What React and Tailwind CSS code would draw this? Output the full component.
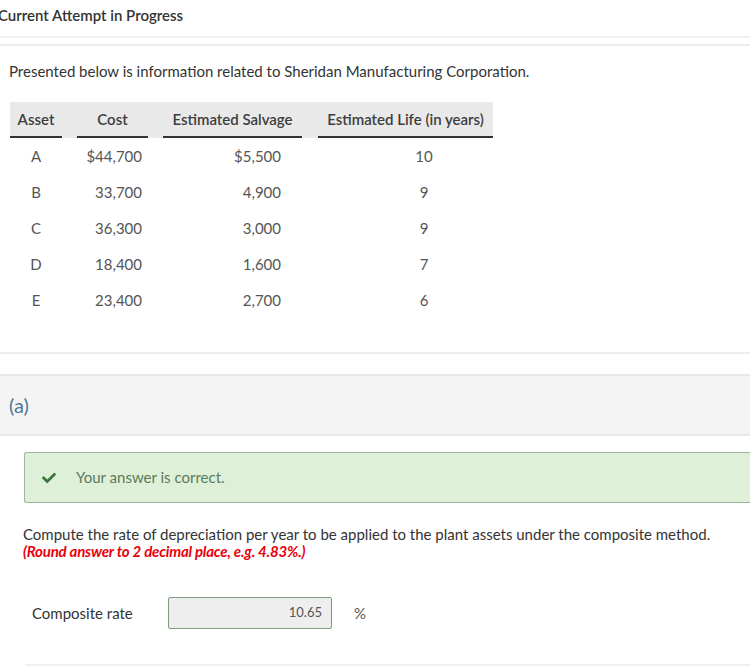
import { FaCheck } from "react-icons/fa";

const rows = [
  { asset: "A", cost: "$44,700", salvage: "$5,500", life: "10" },
  { asset: "B", cost: "33,700", salvage: "4,900", life: "9" },
  { asset: "C", cost: "36,300", salvage: "3,000", life: "9" },
  { asset: "D", cost: "18,400", salvage: "1,600", life: "7" },
  { asset: "E", cost: "23,400", salvage: "2,700", life: "6" },
];

export default function App() {
  return (
    <div className="w-[750px] h-[666px] overflow-hidden bg-white font-['Lato','Liberation_Sans',sans-serif] text-[#333]">
      {/* Title */}
      <div className="h-[36px] pt-[6px] -ml-[2px] text-[15px] leading-[18px] font-semibold text-[#333]">
        Current Attempt in Progress
      </div>
      <div className="border-t-2 border-[#f0f0f0] h-[8px]" />
      <div className="border-t-2 border-[#ececec]" />

      {/* Intro */}
      <p className="mt-[15px] ml-[9px] text-[15px] leading-[20px] text-[#333]">
        Presented below is information related to Sheridan Manufacturing Corporation.
      </p>

      {/* Table */}
      <div className="mt-[21px] ml-[10px] w-[483px]">
        <div className="flex h-[36px] bg-[#e9e9e9] text-[15px] font-semibold text-[#3d3d3d]">
          <div className="w-[52px] flex items-center justify-center border-b-2 border-[#333]">Asset</div>
          <div className="w-[15px]" />
          <div className="w-[71px] flex items-center justify-center border-b-2 border-[#333]">Cost</div>
          <div className="w-[15px]" />
          <div className="w-[139px] flex items-center justify-center border-b-2 border-[#333]">Estimated Salvage</div>
          <div className="w-[16px]" />
          <div className="flex-1 flex items-center justify-center border-b-2 border-[#333]">Estimated Life (in years)</div>
        </div>
        {rows.map((r) => (
          <div key={r.asset} className="flex h-[36px] items-center text-[15px] text-[#555]">
            <div className="w-[52px] text-center">{r.asset}</div>
            <div className="w-[80px] text-right">{r.cost}</div>
            <div className="w-[139px] text-right">{r.salvage}</div>
            <div className="w-[143px] ml-[-10px]">
              <span className="inline-block w-[40px] ml-[133px] text-center">{r.life}</span>
            </div>
          </div>
        ))}
      </div>

      {/* Separator */}
      <div className="mt-[34px] border-t-2 border-[#ececec] h-[22px]" />

      {/* Part (a) band */}
      <div className="h-[62px] bg-[#f4f4f4] border-t-2 border-b-2 border-[#e8e8e8] flex items-center pl-[9px]">
        <span className="text-[20px] text-[#4c7896]">(a)</span>
      </div>

      {/* Correct message */}
      <div className="mt-[16px] ml-[24px] h-[51px] bg-[#dff0d8] border border-r-0 border-[#9cb59b] rounded-l-[3px] flex items-center pl-[16px]">
        <FaCheck className="text-[#3c763d] w-[16px] h-[14px]" />
        <span className="ml-[19px] text-[15px] text-[#5a7b5c]">Your answer is correct.</span>
      </div>

      {/* Question */}
      <div className="mt-[23px] ml-[23px] text-[15px] leading-[17px]">
        <p className="text-[#333]">
          Compute the rate of depreciation per year to be applied to the plant assets under the composite method.
        </p>
        <p className="font-bold italic text-[#e8000b] tracking-[-0.2px]">
          (Round answer to 2 decimal place, e.g. 4.83%.)
        </p>
      </div>

      {/* Answer row */}
      <div className="mt-[37px] flex items-center">
        <span className="ml-[32px] w-[136px] text-[15px] text-[#333]">Composite rate</span>
        <div className="w-[164px] h-[32px] bg-[#eeeeee] border border-[#7f9d7f] rounded-[2px] flex items-center justify-end pr-[9px] text-[13px] text-[#555]">
          10.65
        </div>
        <span className="ml-[22px] text-[15px] text-[#555]">%</span>
      </div>

      <div className="mt-[35px] ml-[25px] border-t-2 border-[#f0f0f0]" />
    </div>
  );
}
